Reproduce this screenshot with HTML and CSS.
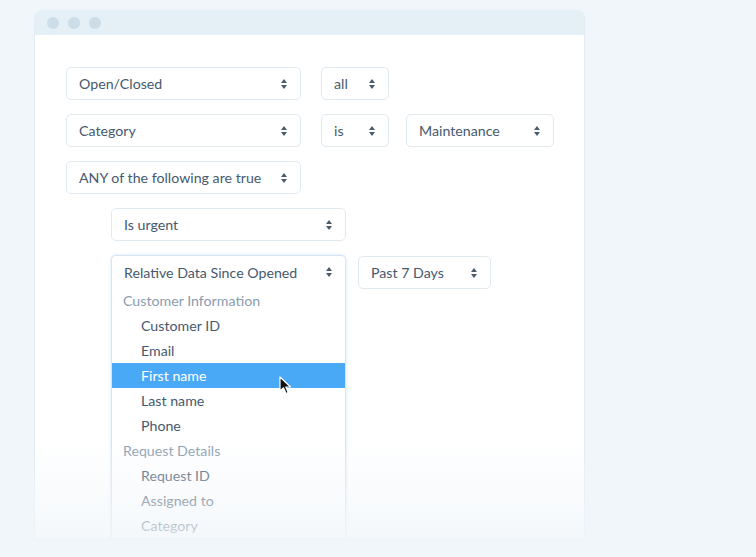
FILE: index.html
```html
<!DOCTYPE html>
<html lang="en">
<head>
    <meta charset="UTF-8">
    <meta name="viewport" content="width=device-width, initial-scale=1.0">
    <title>Filters</title>
    <link rel="stylesheet" href="styles.css">
</head>
<body>
    <div class="window">
        <div class="titlebar">
            <span class="dot"></span>
            <span class="dot"></span>
            <span class="dot"></span>
        </div>
        <div class="content">
            <div class="row">
                <div class="select w-main">Open/Closed<span class="arrows"></span></div>
                <div class="select w-op gap-20">all<span class="arrows"></span></div>
            </div>
            <div class="row">
                <div class="select w-main">Category<span class="arrows"></span></div>
                <div class="select w-op gap-20">is<span class="arrows"></span></div>
                <div class="select w-val gap-17">Maintenance<span class="arrows"></span></div>
            </div>
            <div class="row">
                <div class="select w-main">ANY of the following are true<span class="arrows"></span></div>
            </div>

            <div class="nested">
                <div class="row">
                    <div class="select w-main">Is urgent<span class="arrows"></span></div>
                </div>
                <div class="row">
                    <div class="dropdown w-main">
                        <div class="dropdown-head">Relative Data Since Opened<span class="arrows"></span></div>
                        <ul class="options">
                            <li class="group">Customer Information</li>
                            <li class="option">Customer ID</li>
                            <li class="option">Email</li>
                            <li class="option active">First name</li>
                            <li class="option">Last name</li>
                            <li class="option">Phone</li>
                            <li class="group">Request Details</li>
                            <li class="option">Request ID</li>
                            <li class="option">Assigned to</li>
                            <li class="option">Category</li>
                        </ul>
                    </div>
                    <div class="select w-range gap-12 offset-1">Past 7 Days<span class="arrows"></span></div>
                </div>
            </div>
        </div>
    </div>

    <svg class="cursor" width="14" height="20" viewBox="0 0 14 20">
        <path d="M1 1 L1 15 L4.5 11.8 L7 17.5 L9.2 16.5 L6.8 11 L11.5 11 Z" fill="#111" stroke="#fff" stroke-width="1.2" stroke-linejoin="round"/>
    </svg>

    <div class="fade"></div>
</body>
</html>
```

FILE: styles.css
```css
body {
    background: #f1f6fa;
    color: #46596e;
    font-family: Lato, "Open Sans", sans-serif;
    font-size: 14.2px;
    height: 557px;
    margin: 0;
    overflow: hidden;
}

.window {
    background: #fff;
    border: 1px solid #e3ecf3;
    border-top: none;
    border-radius: 8px 8px 0 0;
    box-sizing: border-box;
    height: 530px;
    margin: 10px 0 0 34px;
    overflow: hidden;
    width: 551px;
}

.titlebar {
    align-items: center;
    background: #e4eff6;
    display: flex;
    gap: 9px;
    height: 25px;
    padding-left: 12px;
}

.dot {
    background: #cddde8;
    border-radius: 50%;
    height: 12px;
    width: 12px;
}

.content {
    padding: 32px 0 0 31px;
}

.row {
    align-items: flex-start;
    display: flex;
    margin-bottom: 14px;
}

.nested {
    margin-left: 45px;
}

.select,
.dropdown-head {
    align-items: center;
    border: 1px solid #e1e9f0;
    border-radius: 5px;
    box-sizing: border-box;
    display: flex;
    height: 33px;
    justify-content: space-between;
    padding: 0 13px 0 12px;
    white-space: nowrap;
}

.w-main { width: 235px; }
.w-op { width: 68px; }
.w-val { width: 148px; }
.w-range { width: 133px; }

.gap-20 { margin-left: 20px; }
.gap-17 { margin-left: 17px; }
.gap-12 { margin-left: 12px; }
.offset-1 { margin-top: 1px; }

/* up / down carets */
.arrows {
    display: inline-flex;
    flex-direction: column;
    gap: 2px;
    margin-left: 8px;
}

.arrows::before,
.arrows::after {
    border-left: 3.5px solid transparent;
    border-right: 3.5px solid transparent;
    content: "";
    height: 0;
    width: 0;
}

.arrows::before {
    border-bottom: 4px solid #4a5b6f;
}

.arrows::after {
    border-top: 4px solid #4a5b6f;
}

.dropdown {
    border: 1px solid #d3e5f6;
    border-radius: 5px 5px 0 0;
    border-bottom: none;
    box-shadow: 0 0 3px rgba(120, 175, 225, 0.35);
    box-sizing: border-box;
    overflow: hidden;
}

.dropdown-head {
    border: none;
    height: 32px;
}

.options {
    list-style: none;
    margin: 0;
    padding: 0;
}

.options li {
    height: 25px;
    line-height: 25px;
    white-space: nowrap;
}

.group {
    color: #8a9caf;
    padding-left: 11px;
}

.option {
    padding-left: 29px;
}

.option.active {
    background: #4aa9f7;
    color: #fff;
}

.cursor {
    left: 279px;
    position: absolute;
    top: 376px;
}

.fade {
    background: linear-gradient(rgba(241, 246, 250, 0), rgba(241, 246, 250, 0.75) 80%, #f1f6fa);
    bottom: 0;
    height: 120px;
    left: 0;
    pointer-events: none;
    position: absolute;
    right: 0;
}
```
